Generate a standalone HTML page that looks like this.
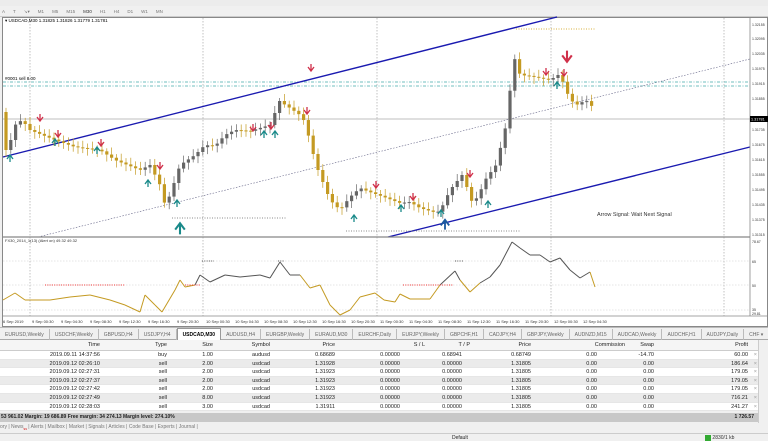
<!DOCTYPE html>
<html><head><meta charset="utf-8"><style>
*{margin:0;padding:0;box-sizing:border-box}
body{width:768px;height:441px;overflow:hidden;background:#f0f0f0;font-family:"Liberation Sans",sans-serif;font-size:5px;color:#222;position:relative}
.abs{position:absolute}
.tb{top:0;left:0;width:768px;height:6px;background:#ececec}
.tf{top:6px;left:0;width:768px;height:11px;background:#f0f0f0;border-bottom:1px solid #ccc;font-size:4.5px;color:#777;line-height:11px;padding-left:2px;white-space:nowrap}
.tf span{margin-right:8px}
.chart{top:17px;left:2px;width:766px;height:310px;background:#fff;border:1px solid #888}
.tabs{top:327px;left:0;width:768px;height:13px;background:#f0f0f0;border-top:1px solid #bbb;border-bottom:1px solid #aaa;font-size:5px;color:#666;line-height:12px;white-space:nowrap}
.tabs span{display:inline-block;padding:0 5px;border-right:1px solid #bbb}
.tabs .act{background:#fff;color:#000;font-weight:bold;border:1px solid #999;border-bottom:none}
.tbl{top:340px;left:0;width:758px}
.row{position:relative;height:8.6px;line-height:8.6px;font-size:5.5px;border-bottom:1px solid #e6e6e6}
.row.h{height:11px;line-height:11px;background:#f5f5f5;border-bottom:1px solid #ccc}
.row.w{background:#fff}.row.g{background:#ebebeb}
.row span{position:absolute;top:0;text-align:right}
.tot{top:413px;left:0;width:758px;height:9px;background:#c8c8c8;font-weight:bold;font-size:5px;line-height:9px;padding-left:1px}
.bt{top:423px;left:0;width:768px;height:9px;font-size:5px;color:#777;line-height:9px;white-space:nowrap}
.st{top:433px;left:0;width:768px;height:8px;background:#f0f0f0;border-top:1px solid #ccc}
.sb{top:340px;left:758px;width:10px;height:83px;background:#f0f0f0;border-left:1px solid #ccc}
</style></head><body>
<div class="abs tb"></div>
<div class="abs tf"><span>A</span><span>T</span><span>↘▾</span><span>M1</span><span>M5</span><span>M15</span><span style="color:#333">M30</span><span>H1</span><span>H4</span><span>D1</span><span>W1</span><span>MN</span></div>
<div class="abs chart"></div>
<svg class="abs" style="top:0;left:0" width="768" height="327" xmlns="http://www.w3.org/2000/svg" id="sv">
<g stroke="#999" stroke-width="0.6" stroke-dasharray="1.5,1.5">
<line x1="30" y1="18" x2="30" y2="316"/><line x1="203" y1="18" x2="203" y2="316"/><line x1="377" y1="18" x2="377" y2="316"/><line x1="551" y1="18" x2="551" y2="316"/><line x1="724" y1="18" x2="724" y2="316"/>
</g>
<line x1="3" y1="119" x2="750" y2="119" stroke="#aaa" stroke-width="0.7"/>
<g stroke="#4aa" stroke-width="0.7" stroke-dasharray="3,1.5,1,1.5"><line x1="3" y1="82" x2="750" y2="82"/><line x1="3" y1="86" x2="750" y2="86"/></g>
<line x1="3" y1="157" x2="557" y2="17" stroke="#1a1ab0" stroke-width="1.4"/>
<line x1="388" y1="237" x2="750" y2="147" stroke="#1a1ab0" stroke-width="1.4"/>
<line x1="38" y1="237" x2="750" y2="59" stroke="#668" stroke-width="0.6" stroke-dasharray="1.5,1.5"/>
<g stroke="#666" stroke-width="0.8" stroke-dasharray="1,1.5"><line x1="172" y1="218" x2="287" y2="218"/><line x1="346" y1="231" x2="520" y2="231"/></g>
<line x1="516" y1="29" x2="595" y2="29" stroke="#c90" stroke-width="0.8" stroke-dasharray="1,1.5"/>
<g id="cd"></g>
<line x1="3" y1="237" x2="750" y2="237" stroke="#888" stroke-width="1.2"/>
<line x1="750" y1="18" x2="750" y2="316" stroke="#888" stroke-width="0.8"/>
<g stroke="#ccc" stroke-width="0.5" stroke-dasharray="1.5,1.5"><line x1="3" y1="261" x2="750" y2="261"/><line x1="3" y1="285" x2="750" y2="285"/><line x1="3" y1="310" x2="750" y2="310"/></g>
<g id="ind"></g>
<g stroke="#e33" stroke-width="1" stroke-dasharray="1,1.3"><line x1="45" y1="285" x2="125" y2="285"/><line x1="185" y1="285" x2="200" y2="285"/><line x1="403" y1="285" x2="453" y2="285"/></g>
<g stroke="#555" stroke-width="1" stroke-dasharray="1,1.3"><line x1="202" y1="261" x2="214" y2="261"/><line x1="455" y1="261" x2="464" y2="261"/><line x1="278" y1="261" x2="284" y2="261"/></g>
<line x1="3" y1="316" x2="768" y2="316" stroke="#888" stroke-width="0.8"/>
<text x="5" y="22" font-size="4.5" fill="#000">▾ USDCAD,M30  1.31825 1.31826 1.31779 1.31781</text>
<text x="5" y="80" font-size="4.5" fill="#000">#0001 sell 8.00</text>
<text x="5" y="242" font-size="4" fill="#333">FX30_2014_1(13) (Alert on) 49.32 49.32</text>
<text x="597" y="216" font-size="5.5" fill="#333">Arrow Signal: Wait Next Signal</text>
<g font-size="3.5" fill="#333">
<text x="752" y="26">1.32155</text><text x="752" y="40">1.32095</text><text x="752" y="55">1.32035</text><text x="752" y="70">1.31975</text><text x="752" y="85">1.31915</text><text x="752" y="100">1.31855</text><text x="752" y="131">1.31735</text><text x="752" y="146">1.31675</text><text x="752" y="161">1.31615</text><text x="752" y="176">1.31555</text><text x="752" y="191">1.31495</text><text x="752" y="206">1.31435</text><text x="752" y="221">1.31375</text><text x="752" y="236">1.31315</text>
<text x="752" y="243">78.67</text><text x="752" y="263">65</text><text x="752" y="287">50</text><text x="752" y="311">35</text><text x="752" y="315">29.81</text>
</g>
<rect x="750" y="116" width="18" height="6" fill="#000"/><text x="751" y="120.5" font-size="3.8" fill="#fff">1.31781</text>
<g font-size="4" fill="#333" id="tx"></g>
<g id="ar"></g>
</svg>
<div class="abs tabs"><span>EURUSD,Weekly</span><span>USDCHF,Weekly</span><span>GBPUSD,H4</span><span>USDJPY,H4</span><span class="act">USDCAD,M30</span><span>AUDUSD,H4</span><span>EURGBP,Weekly</span><span>EURAUD,M30</span><span>EURCHF,Daily</span><span>EURJPY,Weekly</span><span>GBPCHF,H1</span><span>CADJPY,H4</span><span>GBPJPY,Weekly</span><span>AUDNZD,M15</span><span>AUDCAD,Weekly</span><span>AUDCHF,H1</span><span>AUDJPY,Daily</span><span>CHF ▾</span></div>
<div class="abs tbl" id="tbl"></div>
<div class="abs sb"></div>
<div class="abs tot">53 961.02  Margin: 19 686.89  Free margin: 34 274.13  Margin level: 274.10%<span style="position:absolute;right:4px">1 726.57</span></div>
<div class="abs bt">ory | News<sub style="color:#c00;font-size:3px">99</sub> | Alerts | Mailbox | Market | Signals | Articles | Code Base | Experts | Journal |</div>
<div class="abs st"><span class="abs" style="left:452px;top:1px;font-size:5px">Default</span><span class="abs" style="left:705px;top:1px;font-size:5px;color:#333"><b style="background:#3a3;color:#3a3">■■</b> 2830/1 kb</span></div>
<script>
var S="http://www.w3.org/2000/svg";
function el(t,a,p){var e=document.createElementNS(S,t);for(var k in a)e.setAttribute(k,a[k]);p.appendChild(e);return e;}
var P=[[4,150],[8,150],[15,125],[22,120],[30,130],[55,140],[75,147],[100,150],[115,160],[140,170],[150,165],[160,185],[165,205],[170,195],[180,165],[195,155],[205,145],[215,146],[225,135],[235,130],[250,131],[260,128],[270,125],[280,100],[285,105],[290,108],[300,115],[305,122],[312,150],[318,170],[330,200],[340,210],[350,197],[360,188],[367,191],[384,197],[400,203],[410,202],[420,208],[437,213],[443,205],[450,190],[462,175],[468,190],[472,202],[478,197],[485,180],[496,165],[505,130],[512,75],[515,58],[520,75],[530,76],[540,78],[550,80],[558,75],[563,82],[570,100],[578,105],[585,100],[590,103],[595,112]];
function yAt(x){for(var i=0;i<P.length-1;i++){if(x>=P[i][0]&&x<=P[i+1][0]){var t=(x-P[i][0])/(P[i+1][0]-P[i][0]||1);return P[i][1]+t*(P[i+1][1]-P[i][1]);}}return P[P.length-1][1];}
var cd=document.getElementById("cd");
for(var x=6;x<=595;x+=4.8){var o=yAt(x-4.8),c=yAt(x);var up=c<o;var col=up?"#666":"#c49a22";var t=Math.min(o,c),b=Math.max(o,c);if(b-t<1)b=t+1;
el("line",{x1:x,y1:t-3-Math.abs(Math.sin(x))*4,x2:x,y2:b+3+Math.abs(Math.cos(x))*4,stroke:col,"stroke-width":0.7},cd);
el("rect",{x:x-1.6,y:t,width:3.2,height:b-t,fill:col},cd);}
var I=[[3,300],[15,293],[25,300],[50,300],[70,297],[90,295],[110,300],[125,305],[140,312],[145,295],[155,305],[162,312],[175,290],[180,280],[185,287],[195,285],[200,275],[210,282],[225,275],[240,277],[260,275],[270,278],[280,262],[290,275],[300,275],[310,288],[320,285],[330,305],[340,315],[350,310],[360,297],[375,293],[384,300],[395,302],[400,294],[410,299],[430,299],[440,285],[455,271],[460,280],[470,292],[480,283],[490,277],[500,265],[512,242],[520,248],[530,255],[540,255],[550,262],[560,258],[570,270],[580,278],[590,272],[595,287]];
var ind=document.getElementById("ind");
for(var i=0;i<I.length-1;i++){var g=(I[i][1]<287&&I[i+1][1]<287);el("line",{x1:I[i][0],y1:I[i][1],x2:I[i+1][0],y2:I[i+1][1],stroke:g?"#555":"#c49a22","stroke-width":1},ind);}
var tx=document.getElementById("tx");
var L=["6 Sep 2019","9 Sep 00:30","9 Sep 04:30","9 Sep 08:30","9 Sep 12:30","9 Sep 16:30","9 Sep 20:30","10 Sep 00:30","10 Sep 04:30","10 Sep 08:30","10 Sep 12:30","10 Sep 16:30","10 Sep 20:30","11 Sep 00:30","11 Sep 04:30","11 Sep 08:30","11 Sep 12:30","11 Sep 16:30","11 Sep 20:30","12 Sep 00:30","12 Sep 04:30"];
for(var i=0;i<L.length;i++){var t=el("text",{x:3+i*29,y:323},tx);t.textContent=L[i];}
var ar=document.getElementById("ar");
function arrow(x,y,dn,c,s){s=s||1;var d=dn?"M"+(x-3*s)+" "+(y-1*s)+"L"+x+" "+(y+3*s)+"L"+(x+3*s)+" "+(y-1*s)+"M"+x+" "+(y-4*s)+"V"+(y+3*s):"M"+(x-3*s)+" "+(y+1*s)+"L"+x+" "+(y-3*s)+"L"+(x+3*s)+" "+(y+1*s)+"M"+x+" "+(y+4*s)+"V"+(y-3*s);el("path",{d:d,stroke:c,"stroke-width":1.3*s,fill:"none"},ar);}
var R="#d0304a",T="#1a8a8a";
[[40,118],[58,134],[101,143],[160,166],[311,68],[307,111],[253,128],[271,126],[376,185],[413,197],[470,174],[546,72],[564,73]].forEach(function(a){arrow(a[0],a[1],1,R);});
[[10,158],[55,142],[97,150],[148,183],[177,203],[264,134],[275,134],[354,218],[401,208],[441,213],[488,204],[557,85]].forEach(function(a){arrow(a[0],a[1],0,T);});
arrow(567,57,1,R,1.6);arrow(180,228,0,T,1.6);arrow(445,224,0,"#1a5aa0",1.4);
var rows=[["2019.09.11 14:37:56","buy","1.00","audusd","0.68689","0.00000","0.68941","0.68749","0.00","-14.70","60.00"],["2019.09.12 02:26:10","sell","2.00","usdcad","1.31928","0.00000","0.00000","1.31805","0.00","0.00","186.64"],["2019.09.12 02:27:31","sell","2.00","usdcad","1.31923","0.00000","0.00000","1.31805","0.00","0.00","179.05"],["2019.09.12 02:27:37","sell","2.00","usdcad","1.31923","0.00000","0.00000","1.31805","0.00","0.00","179.05"],["2019.09.12 02:27:42","sell","2.00","usdcad","1.31923","0.00000","0.00000","1.31805","0.00","0.00","179.05"],["2019.09.12 02:27:49","sell","8.00","usdcad","1.31923","0.00000","0.00000","1.31805","0.00","0.00","716.21"],["2019.09.12 02:28:03","sell","3.00","usdcad","1.31911","0.00000","0.00000","1.31805","0.00","0.00","241.27"]];
var RX=[100,167,213,270,335,400,462,531,597,654,748];
var H=["Time","Type","Size","Symbol","Price","S / L","T / P","Price","Commission","Swap","Profit"];
var tb=document.getElementById("tbl"),h="<div class='row h'>";
H.forEach(function(s,i){var r=(i==5?425:i==6?470:i==8?625:RX[i]);h+="<span style='right:"+(758-r)+"px'>"+s+"</span>";});h+="</div>";
rows.forEach(function(r,j){h+="<div class='row "+(j%2?"g":"w")+"'>";r.forEach(function(s,i){h+="<span style='right:"+(758-RX[i])+"px'>"+s+"</span>";});h+="<span style='right:1px;color:#999'>×</span></div>";});
tb.innerHTML=h;
</script>
</body></html>
